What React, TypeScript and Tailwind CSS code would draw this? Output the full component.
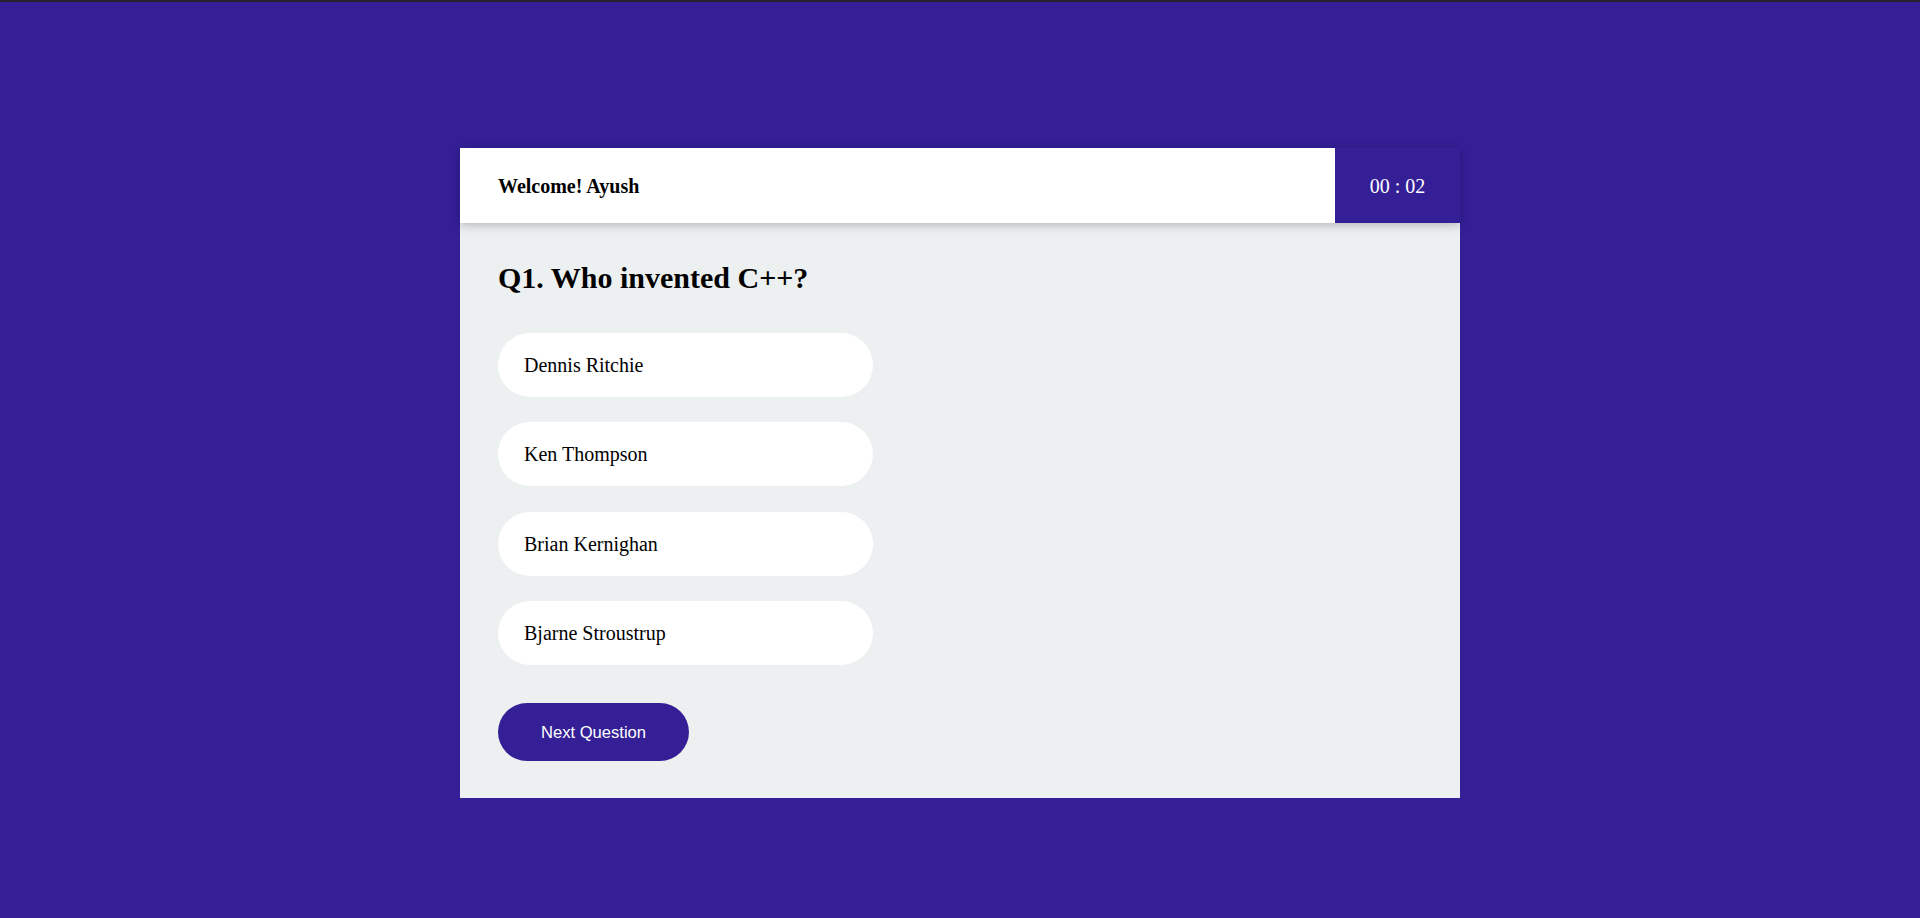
import React from "react";

const options = ["Dennis Ritchie", "Ken Thompson", "Brian Kernighan", "Bjarne Stroustrup"];

export default function App() {
  return (
    <div className="min-h-[918px] w-full bg-[#341f97] border-t-2 border-[#24222c] pt-[146px] flex justify-center" style={{ fontFamily: '"Liberation Serif", "Times New Roman", serif' }}>
      <div className="w-[1000px] h-[650px] flex flex-col bg-[#ecf0f1]">
        <div className="h-[75px] flex items-stretch bg-white shadow-[0_2px_10px_rgba(0,0,0,0.25)] relative z-10">
          <div className="flex-1 flex items-center pl-[38px] text-[20px] font-bold text-black">Welcome! Ayush</div>
          <div className="w-[125px] flex items-center justify-center bg-[#341f97] text-white text-[20px]">00 : 02</div>
        </div>
        <div className="flex-1 flex flex-col px-[38px] pt-[38px] pb-[37px]">
          <h2 className="text-[30px] font-bold text-black leading-[33px]">Q1. Who invented C++?</h2>
          <div className="flex flex-col gap-[25.3px] mt-[39px] w-[375px]">
            {options.map((o) => (
              <div key={o} className="h-[64px] rounded-full bg-white flex items-center pl-[26px] text-[20px] text-black">
                {o}
              </div>
            ))}
          </div>
          <button className="mt-[38px] w-[191px] h-[58px] pt-[4px] rounded-full bg-[#341f97] text-white text-[16.6px]" style={{ fontFamily: '"Liberation Sans", Arial, sans-serif' }}>
            Next Question
          </button>
        </div>
      </div>
    </div>
  );
}
